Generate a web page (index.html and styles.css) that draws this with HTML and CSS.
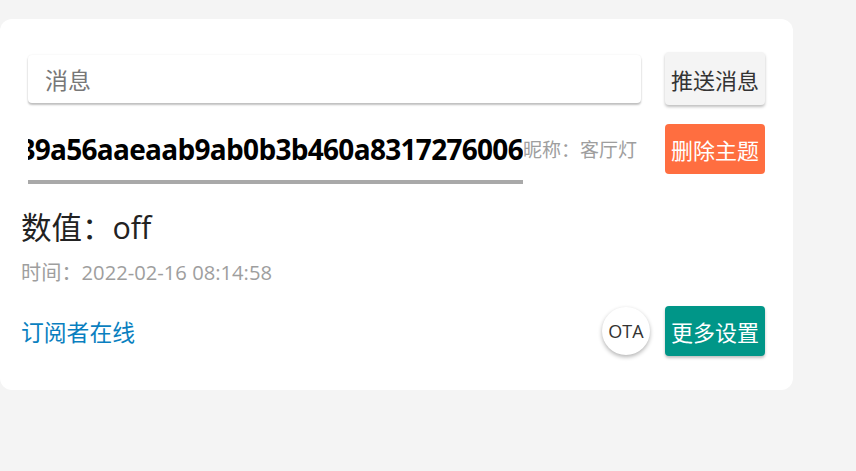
FILE: index.html
```html
<!DOCTYPE html>
<html lang="zh">
<head>
<meta charset="utf-8">
<link rel="stylesheet" href="styles.css">
</head>
<body>
<div class="card">
  <div class="row row-msg">
    <div class="input"><span class="placeholder">消息</span></div>
    <button class="btn btn-grey">推送消息</button>
  </div>
  <div class="row row-topic">
    <div class="topic-wrap">
      <div class="topic-clip"><span class="topic">39a56aaeaab9ab0b3b460a8317276006</span></div>
      <div class="scrollbar"></div>
    </div>
    <span class="nick">昵称：客厅灯</span>
    <button class="btn btn-orange">删除主题</button>
  </div>
  <div class="value">数值：off</div>
  <div class="time">时间：2022-02-16 08:14:58</div>
  <div class="row row-foot">
    <span class="online">订阅者在线</span>
    <div class="actions">
      <button class="ota">OTA</button>
      <button class="btn btn-teal">更多设置</button>
    </div>
  </div>
</div>
</body>
</html>
```
FILE: styles.css
```css
html, body {
  margin: 0;
  padding: 0;
  background: #f4f4f4;
  font-family: "Open Sans", "Noto Sans CJK SC", sans-serif;
}
body { padding-top: 19px; }
.card {
  width: 793px;
  height: 371px;
  box-sizing: border-box;
  background: #fff;
  border-radius: 12px;
  padding: 0 28px 0 21px;
  overflow: hidden;
}
.row { display: flex; align-items: center; }
.row-msg { padding: 33px 0 0 7px; }
.input {
  width: 613px;
  height: 48px;
  box-sizing: border-box;
  background: #fff;
  border-radius: 4px;
  box-shadow: 0 2px 2px rgba(0,0,0,0.24), 0 0 2px rgba(0,0,0,0.08);
  display: flex;
  align-items: center;
  padding-left: 17px;
}
.placeholder { color: #777; font-size: 23px; }
.btn {
  margin-left: auto;
  width: 100px;
  height: 53px;
  border: none;
  border-radius: 4px;
  font-family: inherit;
  font-size: 22px;
  padding: 0;
  box-shadow: 0 2px 3px rgba(0,0,0,0.25);
}
.btn-grey { background: #f4f4f4; color: #333; }
.row-topic { padding: 19px 0 0 7px; align-items: flex-start; }
.topic-wrap { width: 495px; }
.topic-clip {
  display: flex;
  justify-content: flex-end;
  overflow: hidden;
  height: 42px;
  align-items: center;
  margin-top: 4px;
}
.topic {
  font-weight: 700;
  font-size: 28px;
  color: #000;
  white-space: nowrap;
  flex-shrink: 0;
  letter-spacing: -0.7px;
}
.scrollbar { height: 4px; background: #a9a9a9; margin-top: 10px; }
.nick {
  color: #9e9e9e;
  font-size: 19px;
  line-height: 26px;
  margin-top: 13px;
  white-space: nowrap;
}
.btn-orange {
  background: #ff6e40;
  color: #fff;
  height: 50px;
  box-shadow: none;
}
.value {
  font-size: 30.5px;
  color: #222;
  margin-top: 23px;
  line-height: 40px;
}
.time {
  font-size: 20.2px;
  color: #9e9e9e;
  margin-top: 12px;
  line-height: 26px;
}
.row-foot { margin-top: 21px; }
.online { color: #0a7fc0; font-size: 22.8px; }
.actions { margin-left: auto; display: flex; align-items: center; gap: 15px; }
.ota {
  width: 48px;
  height: 48px;
  border-radius: 50%;
  border: none;
  background: #fff;
  color: #333;
  font-family: inherit;
  font-size: 18px;
  padding: 0;
  box-shadow: 0 2px 4px rgba(0,0,0,0.3);
}
.btn-teal { background: #009688; color: #fff; height: 50px; margin-left: 0; }
```
